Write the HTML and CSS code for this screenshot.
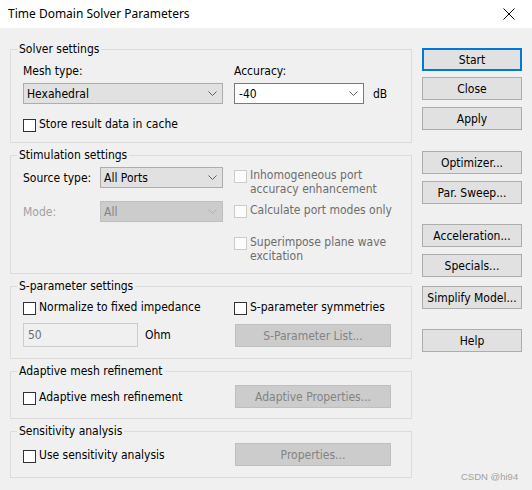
FILE: index.html
```html
<!DOCTYPE html>
<html>
<head>
<meta charset="utf-8">
<title>Time Domain Solver Parameters</title>
<link rel="stylesheet" href="styles.css">
</head>
<body>
<div class="titlebar">
  <span class="title">Time Domain Solver Parameters</span>
  <svg class="close" width="12" height="12" viewBox="0 0 12 12"><path d="M0.5 0.5 L11.5 11.5 M11.5 0.5 L0.5 11.5" stroke="#000" stroke-width="1" fill="none"/></svg>
</div>
<div class="dialog">
  <div class="groups">
    <fieldset class="group g-solver">
      <legend>Solver settings</legend>
      <div class="solver-row">
        <div class="col-mesh">
          <div class="label">Mesh type:</div>
          <div class="combo combo-mesh"><span>Hexahedral</span><svg class="chev" width="9" height="5" viewBox="0 0 9 5"><path d="M0.5 0.5 L4.5 4.5 L8.5 0.5" stroke="#606060" fill="none"/></svg></div>
        </div>
        <div class="col-acc">
          <div class="label">Accuracy:</div>
          <div class="acc-row">
            <div class="combo combo-edit"><span>-40</span><svg class="chev" width="9" height="5" viewBox="0 0 9 5"><path d="M0.5 0.5 L4.5 4.5 L8.5 0.5" stroke="#606060" fill="none"/></svg></div>
            <span class="unit">dB</span>
          </div>
        </div>
      </div>
      <div class="check check-cache"><span class="box"></span><span>Store result data in cache</span></div>
    </fieldset>

    <fieldset class="group g-stim">
      <legend>Stimulation settings</legend>
      <div class="stim-row">
        <div class="stim-left">
          <div class="field-row">
            <span class="field-label">Source type:</span>
            <div class="combo combo-src"><span>All Ports</span><svg class="chev" width="9" height="5" viewBox="0 0 9 5"><path d="M0.5 0.5 L4.5 4.5 L8.5 0.5" stroke="#606060" fill="none"/></svg></div>
          </div>
          <div class="field-row field-row-2">
            <span class="field-label disabled-label">Mode:</span>
            <div class="combo combo-src combo-disabled"><span>All</span><svg class="chev" width="9" height="5" viewBox="0 0 9 5"><path d="M0.5 0.5 L4.5 4.5 L8.5 0.5" stroke="#b0b0b0" fill="none"/></svg></div>
          </div>
        </div>
        <div class="stim-right">
          <div class="check check-disabled"><span class="box"></span><span>Inhomogeneous port<br>accuracy enhancement</span></div>
          <div class="check check-disabled check-modes"><span class="box"></span><span>Calculate port modes only</span></div>
          <div class="check check-disabled check-plane"><span class="box"></span><span>Superimpose plane wave<br>excitation</span></div>
        </div>
      </div>
    </fieldset>

    <fieldset class="group g-spar">
      <legend>S-parameter settings</legend>
      <div class="spar-row">
        <div class="check spar-left"><span class="box"></span><span>Normalize to fixed impedance</span></div>
        <div class="check"><span class="box"></span><span>S-parameter symmetries</span></div>
      </div>
      <div class="spar-row spar-row-2">
        <div class="imp">
          <div class="edit-disabled">50</div>
          <span class="unit-ohm">Ohm</span>
        </div>
        <div class="btn btn-disabled btn-wide btn-spar">S-Parameter List...</div>
      </div>
    </fieldset>

    <fieldset class="group g-adapt">
      <legend>Adaptive mesh refinement</legend>
      <div class="opt-row">
        <div class="check opt-left"><span class="box"></span><span>Adaptive mesh refinement</span></div>
        <div class="btn btn-disabled btn-wide">Adaptive Properties...</div>
      </div>
    </fieldset>

    <fieldset class="group g-sens">
      <legend>Sensitivity analysis</legend>
      <div class="opt-row">
        <div class="check opt-left"><span class="box"></span><span>Use sensitivity analysis</span></div>
        <div class="btn btn-disabled btn-wide">Properties...</div>
      </div>
    </fieldset>
  </div>

  <div class="buttons">
    <div class="btn btn-default mt6">Start</div>
    <div class="btn mt6">Close</div>
    <div class="btn mt7">Apply</div>
    <div class="btn mt21">Optimizer...</div>
    <div class="btn mt7">Par. Sweep...</div>
    <div class="btn mt20">Acceleration...</div>
    <div class="btn mt7">Specials...</div>
    <div class="btn mt9">Simplify Model...</div>
    <div class="btn mt20">Help</div>
  </div>
</div>
<div class="watermark">CSDN @hi94</div>
</body>
</html>
```

FILE: styles.css
```css
* { box-sizing: border-box; }

html, body {
  margin: 0;
  padding: 0;
}

body {
  width: 532px;
  height: 490px;
  overflow: hidden;
  position: relative;
  background: #f0f0f0;
  color: #000;
  font-family: "DejaVu Sans Condensed", "DejaVu Sans", sans-serif;
  font-size: 12px;
  line-height: 14px;
}

.titlebar {
  height: 28px;
  background: #fff;
  display: flex;
  align-items: center;
  justify-content: space-between;
  padding: 0 17px 0 8px;
}

.title {
  font-family: "Noto Sans", sans-serif;
  font-size: 12px;
}

.close { display: block; }

.dialog {
  display: flex;
  align-items: flex-start;
  padding: 14px 0 0 10px;
  gap: 10px;
}

.groups {
  width: 402px;
  display: flex;
  flex-direction: column;
  gap: 5px;
}

.group {
  margin: 0;
  min-width: 0;
  border: 1px solid #dcdcdc;
  padding: 0 0 0 12px;
}

.group legend {
  padding: 0 2px;
  margin-left: -6px;
  line-height: 14px;
  height: 14px;
}

/* Solver settings */
.g-solver { padding-top: 8px; padding-bottom: 11px; }

.solver-row { display: flex; gap: 11px; }

.label { height: 14px; }

.combo {
  height: 21px;
  display: flex;
  align-items: center;
  border: 1px solid #adadad;
  background: #e1e1e1;
  padding-left: 3px;
}

.combo .chev { margin-left: auto; margin-right: 5px; }

.combo-mesh { width: 200px; margin-top: 5px; }

.acc-row { display: flex; align-items: center; margin-top: 5px; }

.combo-edit {
  width: 130px;
  background: #fff;
  border-color: #7a7a7a;
  padding-left: 4px;
}

.unit { margin-left: 9px; }

.check { display: flex; align-items: flex-start; }

.check .box {
  flex: none;
  width: 13px;
  height: 13px;
  margin-top: 2px;
  margin-bottom: -1px;
  margin-right: 3px;
  border: 1px solid #333;
  background: #fff;
}

.check-cache { margin-top: 13px; }

.check-disabled { color: #6d6d6d; }
.check-disabled .box { border-color: #cccccc; background: #fcfcfc; }

/* Stimulation */
.g-stim { padding-top: 5px; padding-bottom: 10px; }

.stim-row { display: flex; }

.stim-left { width: 211px; }

.field-row { display: flex; align-items: center; }
.field-row-2 { margin-top: 13px; }

.field-label { width: 77px; }

.disabled-label { color: #a0a0a0; }

.combo-src { width: 123px; }

.combo-disabled {
  background: #cccccc;
  border-color: #bfbfbf;
  color: #838383;
}

.stim-right { margin-top: 1px; }

.check-modes { margin-top: 7px; }
.check-plane { margin-top: 18px; }

/* S-parameter */
.g-spar { padding-top: 7px; padding-bottom: 11px; }

.spar-row { display: flex; align-items: flex-start; }
.spar-left { width: 211px; }
.spar-row-2 { margin-top: 9px; }

.imp { width: 212px; display: flex; align-items: center; }

.edit-disabled {
  width: 115px;
  height: 24px;
  border: 1px solid #cccccc;
  background: #f0f0f0;
  color: #6d6d6d;
  padding: 4px 0 0 4px;
}

.unit-ohm { margin-left: 7px; }

.btn-spar { margin-top: 1px; }

/* Adaptive / Sensitivity */
.g-adapt { padding-top: 7px; padding-bottom: 10px; }
.g-sens { padding-top: 5px; padding-bottom: 11px; }

.opt-row { display: flex; align-items: center; }
.opt-left { width: 212px; }

/* Buttons */
.btn {
  height: 23px;
  display: flex;
  align-items: center;
  justify-content: center;
  border: 1px solid #adadad;
  background: #e1e1e1;
  white-space: nowrap;
}

.btn-default { border: 2px solid #0078d7; }

.btn-disabled {
  background: #cccccc;
  border-color: #bfbfbf;
  color: #838383;
}

.btn-wide { width: 156px; }

.buttons {
  width: 100px;
  display: flex;
  flex-direction: column;
}

.mt6 { margin-top: 6px; }
.mt7 { margin-top: 7px; }
.mt9 { margin-top: 9px; }
.mt20 { margin-top: 20px; }
.mt21 { margin-top: 21px; }

.watermark {
  position: absolute;
  left: 461px;
  top: 471px;
  font-family: "Liberation Sans", sans-serif;
  font-size: 9.5px;
  line-height: 12px;
  color: #a0a0a0;
}
```
